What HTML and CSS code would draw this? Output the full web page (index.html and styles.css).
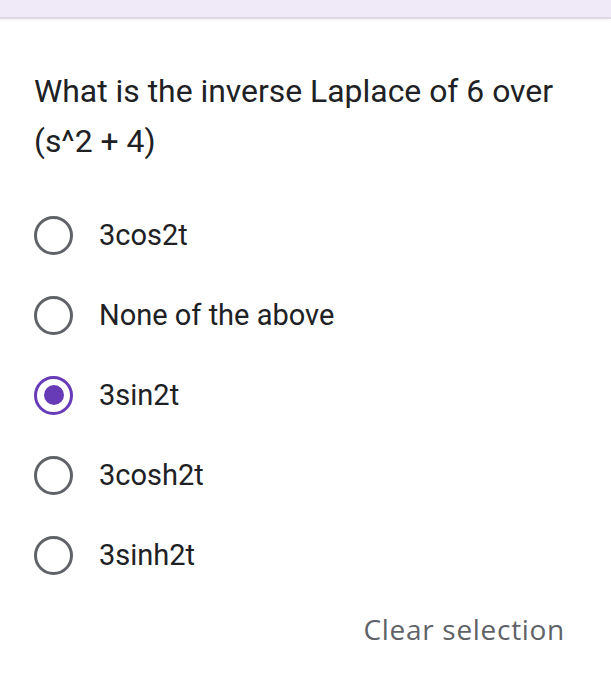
FILE: index.html
```html
<!DOCTYPE html>
<html>
<head>
<meta charset="utf-8">
<link rel="stylesheet" href="styles.css">
</head>
<body>
<div class="topbar"></div>
<div class="card">
  <div class="question">What is the inverse Laplace of 6 over (s^2 + 4)</div>
  <div class="options">
    <div class="option"><span class="radio"></span><span class="label">3cos2t</span></div>
    <div class="option"><span class="radio"></span><span class="label">None of the above</span></div>
    <div class="option"><span class="radio checked"></span><span class="label">3sin2t</span></div>
    <div class="option"><span class="radio"></span><span class="label">3cosh2t</span></div>
    <div class="option"><span class="radio"></span><span class="label">3sinh2t</span></div>
  </div>
  <div class="footer"><span class="clear">Clear selection</span></div>
</div>
</body>
</html>
```
FILE: styles.css
```css
html, body {
  margin: 0;
  padding: 0;
  background: #ffffff;
  font-family: Roboto, "Liberation Sans", sans-serif;
  color: #202124;
}
.topbar {
  height: 17px;
  background: #efe9f8;
  border-bottom: 2px solid #dcd9e1;
  box-shadow: 0 2px 2px rgba(0, 0, 0, 0.03);
}
.card {
  padding: 47px 46px 0 34px;
}
.question {
  font-size: 31.9px;
  line-height: 50px;
}
.options {
  margin-top: 29px;
  display: flex;
  flex-direction: column;
}
.option {
  display: flex;
  align-items: center;
  height: 80px;
}
.radio {
  box-sizing: border-box;
  width: 39px;
  height: 39px;
  border: 3.6px solid #5f6368;
  border-radius: 50%;
  flex: none;
  display: flex;
  align-items: center;
  justify-content: center;
}
.radio.checked {
  border-color: #673ab7;
}
.radio.checked::after {
  content: "";
  width: 20px;
  height: 20px;
  border-radius: 50%;
  background: #673ab7;
}
.label {
  margin-left: 26px;
  font-size: 29px;
}
.footer {
  display: flex;
  justify-content: flex-end;
  padding-top: 15px;
}
.clear {
  font-family: "Open Sans", sans-serif;
  font-weight: 500;
  font-size: 28px;
  line-height: 38px;
  letter-spacing: 0.7px;
  color: #5f6368;
}
```
